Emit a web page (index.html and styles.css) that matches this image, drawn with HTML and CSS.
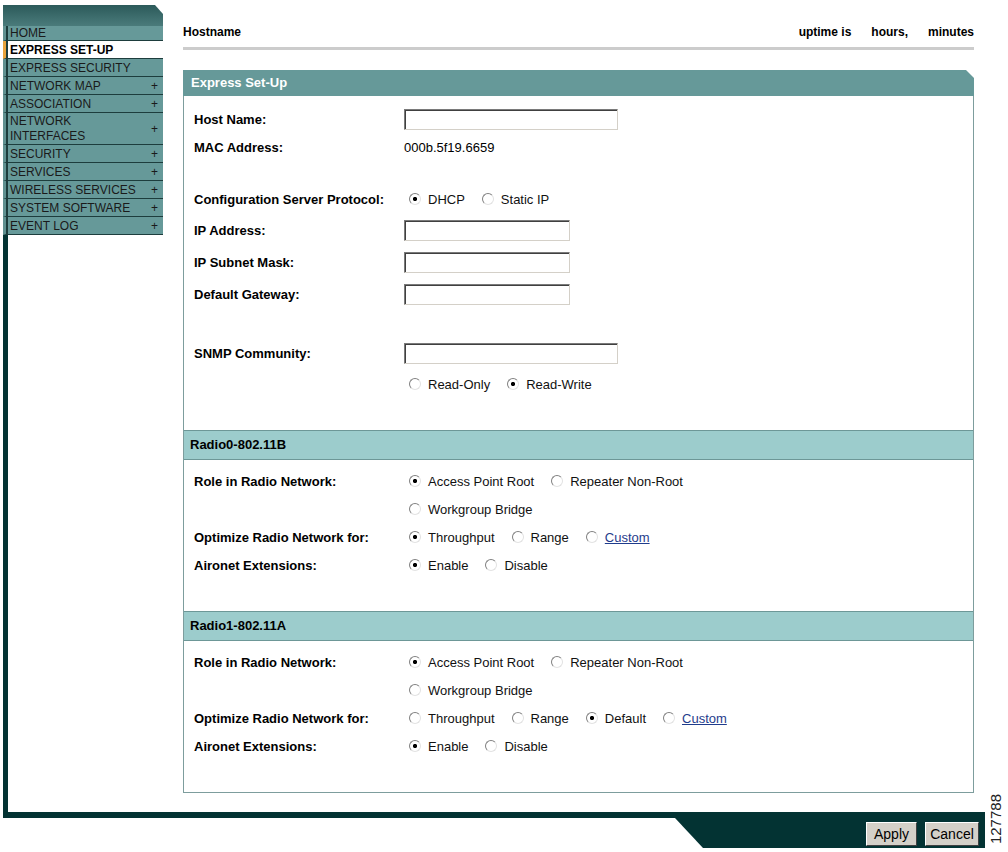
FILE: index.html
```html
<!DOCTYPE html>
<html>
	<head>
		<meta charset="utf-8" />
		<title>Express Set-Up</title>
		<link rel="stylesheet" href="styles.css">
	</head>
	<body>
		<div class="shell">
			<div class="frame">
				<nav class="nav">
					<div class="nav-head"></div>
					<ul class="menu">
						<li class="first">HOME</li>
						<li class="current">EXPRESS SET-UP</li>
						<li>EXPRESS SECURITY</li>
						<li>NETWORK MAP<span class="plus">+</span></li>
						<li>ASSOCIATION<span class="plus">+</span></li>
						<li class="two"><span>NETWORK<br>INTERFACES</span><span class="plus">+</span></li>
						<li>SECURITY<span class="plus">+</span></li>
						<li>SERVICES<span class="plus">+</span></li>
						<li>WIRELESS SERVICES<span class="plus">+</span></li>
						<li>SYSTEM SOFTWARE<span class="plus">+</span></li>
						<li>EVENT LOG<span class="plus">+</span></li>
					</ul>
					<div class="rail"></div>
				</nav>
				<main class="content">
					<div class="topbar">
						<span>Hostname</span>
						<div class="uptime">
							<span>uptime is</span>
							<span>hours,</span>
							<span>minutes</span>
						</div>
					</div>
					<form class="panel">
						<h1 class="panel-title">Express Set-Up</h1>
						<div class="panel-body">
							<div class="group">
								<div class="row"><span class="label">Host Name:</span><input class="field wide" type="text"></div>
								<div class="row"><span class="label">MAC Address:</span><span class="value">000b.5f19.6659</span></div>
								<div class="row mid after-gap"><span class="label">Configuration Server Protocol:</span>
									<label class="opt"><input class="radio" type="radio" name="proto" checked>DHCP</label>
									<label class="opt"><input class="radio" type="radio" name="proto">Static IP</label>
								</div>
								<div class="row tall"><span class="label">IP Address:</span><input class="field short" type="text"></div>
								<div class="row tall"><span class="label">IP Subnet Mask:</span><input class="field short" type="text"></div>
								<div class="row tall"><span class="label">Default Gateway:</span><input class="field short" type="text"></div>
								<div class="row tall after-gap-lg"><span class="label">SNMP Community:</span><input class="field wide" type="text"></div>
								<div class="row mid"><span class="label"></span>
									<label class="opt"><input class="radio" type="radio" name="snmp">Read-Only</label>
									<label class="opt"><input class="radio" type="radio" name="snmp" checked>Read-Write</label>
								</div>
							</div>

							<h2 class="section">Radio0-802.11B</h2>
							<div class="group radio-group">
								<div class="row"><span class="label">Role in Radio Network:</span>
									<label class="opt"><input class="radio" type="radio" name="role0" checked>Access Point Root</label>
									<label class="opt"><input class="radio" type="radio" name="role0">Repeater Non-Root</label>
								</div>
								<div class="row"><span class="label"></span>
									<label class="opt"><input class="radio" type="radio" name="role0">Workgroup Bridge</label>
								</div>
								<div class="row"><span class="label">Optimize Radio Network for:</span>
									<label class="opt"><input class="radio" type="radio" name="opt0" checked>Throughput</label>
									<label class="opt"><input class="radio" type="radio" name="opt0">Range</label>
									<label class="opt"><input class="radio" type="radio" name="opt0"><a href="#" class="link">Custom</a></label>
								</div>
								<div class="row"><span class="label">Aironet Extensions:</span>
									<label class="opt"><input class="radio" type="radio" name="ext0" checked>Enable</label>
									<label class="opt"><input class="radio" type="radio" name="ext0">Disable</label>
								</div>
							</div>

							<h2 class="section">Radio1-802.11A</h2>
							<div class="group radio-group last">
								<div class="row"><span class="label">Role in Radio Network:</span>
									<label class="opt"><input class="radio" type="radio" name="role1" checked>Access Point Root</label>
									<label class="opt"><input class="radio" type="radio" name="role1">Repeater Non-Root</label>
								</div>
								<div class="row"><span class="label"></span>
									<label class="opt"><input class="radio" type="radio" name="role1">Workgroup Bridge</label>
								</div>
								<div class="row"><span class="label">Optimize Radio Network for:</span>
									<label class="opt"><input class="radio" type="radio" name="opt1">Throughput</label>
									<label class="opt"><input class="radio" type="radio" name="opt1">Range</label>
									<label class="opt"><input class="radio" type="radio" name="opt1" checked>Default</label>
									<label class="opt"><input class="radio" type="radio" name="opt1"><a href="#" class="link">Custom</a></label>
								</div>
								<div class="row"><span class="label">Aironet Extensions:</span>
									<label class="opt"><input class="radio" type="radio" name="ext1" checked>Enable</label>
									<label class="opt"><input class="radio" type="radio" name="ext1">Disable</label>
								</div>
							</div>
						</div>
					</form>
				</main>
			</div>
			<div class="base"></div>
			<div class="foot">
				<button type="button" class="btn apply">Apply</button>
				<button type="button" class="btn cancel">Cancel</button>
			</div>
			<span class="fig">127788</span>
		</div>
	</body>
</html>
```

FILE: styles.css
```css
:root {
    --dark: #033333;
    --teal: #669999;
    --teal-light: #9ccccc;
    --line: #7d9d9d;
    --font-family: "Liberation Sans", Arial, sans-serif;
}

body {
    margin: 0;
    padding: 0;
    background: #fff;
    color: #000;
    font-family: var(--font-family);
}

.shell {
    position: relative;
    width: 982px;
    margin: 5px 0 0 3px;
}

.frame {
    display: flex;
    height: 807px;
}

/* left navigation */

.nav {
    width: 160px;
    display: flex;
    flex-direction: column;
}

.nav-head {
    height: 21px;
    background: linear-gradient(#2c5a5a, #4a7b7b);
    clip-path: polygon(0 0, calc(100% - 8px) 0, 100% 9px, 100% 100%, 0 100%);
}

.menu {
    list-style: none;
    margin: 0;
    padding: 0;
}

.menu li {
    display: flex;
    justify-content: space-between;
    align-items: center;
    height: 17px;
    line-height: 18px;
    padding: 0 5px 0 4px;
    background: var(--teal);
    border-left: 3px solid #5f9090;
    border-bottom: 1px solid #1d3d3d;
    box-shadow: inset 2px 0 0 #1d3d3d;
    font-size: 12px;
    color: #1a1a1a;
}

.menu li.first {
    height: 14px;
    line-height: 15px;
}

.menu li.current {
    background: #fff;
    border-left-color: #e8a33d;
    font-weight: bold;
    color: #000;
}

.menu li.two {
    height: 30px;
    padding-top: 1px;
    line-height: 15px;
}

.rail {
    flex: 1;
    width: 5px;
    background: var(--dark);
}

/* main content */

.content {
    width: 791px;
    margin-left: 20px;
    display: flex;
    flex-direction: column;
}

.topbar {
    display: flex;
    justify-content: space-between;
    padding: 20px 0 8px 0;
    border-bottom: 3px solid #cccccc;
    font-size: 12px;
    line-height: 14px;
    font-weight: bold;
}

.uptime {
    display: flex;
    gap: 20px;
}

.panel {
    margin: 20px 0 0;
}

.panel-title {
    margin: 0;
    height: 26px;
    line-height: 26px;
    padding-left: 8px;
    background: var(--teal);
    color: #fff;
    font-size: 13px;
    font-weight: bold;
    clip-path: polygon(0 0, calc(100% - 8px) 0, 100% 8px, 100% 100%, 0 100%);
}

.panel-body {
    border: 1px solid var(--line);
    border-top: 0;
}

.group {
    padding: 9px 0 31px 10px;
}

.radio-group {
    padding: 7px 0 32px 10px;
}

.section {
    margin: 0;
    height: 28px;
    line-height: 28px;
    padding-left: 6px;
    background: var(--teal-light);
    border-top: 1px solid #6d9797;
    border-bottom: 1px solid #6d9797;
    font-size: 13px;
    font-weight: bold;
}

.row {
    display: flex;
    align-items: center;
    height: 28px;
}

.row.mid {
    height: 30px;
}

.row.tall {
    height: 32px;
}

.after-gap {
    margin-top: 23px;
}

.after-gap-lg {
    margin-top: 27px;
}

.label {
    width: 210px;
    flex: none;
    font-size: 13px;
    font-weight: bold;
}

.value {
    font-size: 13px;
}

.field {
    box-sizing: border-box;
    height: 21px;
    margin: 0;
    padding: 1px 3px;
    background: #fff;
    border: 1px solid;
    border-color: #7a7a7a #d4d0c8 #d4d0c8 #7a7a7a;
    box-shadow: inset 1px 1px 0 #404040;
    font-family: var(--font-family);
    font-size: 13px;
}

.field.wide {
    width: 214px;
}

.field.short {
    width: 166px;
}

.opt {
    display: inline-flex;
    align-items: center;
    margin-right: 12px;
    font-size: 13px;
    color: #111;
}

.radio {
    appearance: none;
    -webkit-appearance: none;
    box-sizing: border-box;
    width: 12px;
    height: 12px;
    margin: 0 7px 0 5px;
    border-radius: 50%;
    border: 1px solid;
    border-color: #808080 #e2e2e2 #e2e2e2 #808080;
    background: #fff;
}

.radio:checked {
    background: radial-gradient(circle, #000 0 1.8px, #fff 2.4px);
}

.link {
    color: #1f3c8c;
    text-decoration: underline;
}

/* bottom frame */

.base {
    height: 6px;
    background: var(--dark);
}

.foot {
    box-sizing: border-box;
    display: flex;
    justify-content: flex-end;
    gap: 8px;
    width: 310px;
    height: 30px;
    margin-left: 672px;
    padding: 4px 6px 0 0;
    background: var(--dark);
    clip-path: polygon(0 0, 100% 0, 100% 100%, 28px 100%);
}

.btn {
    height: 24px;
    padding: 0;
    background: #d4d0c8;
    border: 1px solid;
    border-color: #fff #404040 #404040 #fff;
    border-radius: 0;
    font-family: var(--font-family);
    font-size: 14px;
    color: #000;
}

.btn.apply {
    width: 51px;
}

.btn.cancel {
    width: 54px;
}

.fig {
    position: absolute;
    left: 986px;
    top: 789px;
    writing-mode: vertical-rl;
    transform: rotate(180deg);
    font-size: 15px;
    line-height: 13px;
    color: #222;
}
```
